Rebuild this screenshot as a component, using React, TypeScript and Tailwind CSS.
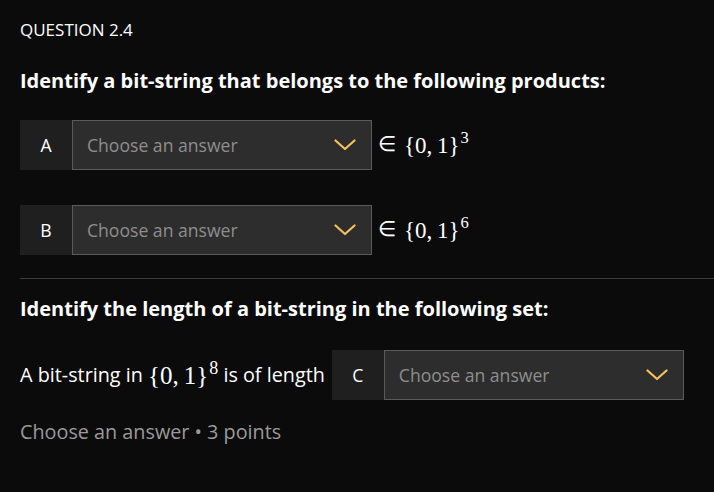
import React from "react";

const Chevron = () => (
  <svg width="22" height="12" viewBox="0 0 22 12" fill="none">
    <polyline points="1.5,1.5 11,10 20.5,1.5" stroke="#f4c15d" strokeWidth="2.2" strokeLinecap="round" strokeLinejoin="round" />
  </svg>
);

const Select = () => (
  <div className="flex h-[50px] w-[300px] items-center justify-between border border-[#5a5a5a] bg-[#2d2d2d] pl-[14px] pr-[15px]">
    <span className="text-[17.6px] text-[#8e8e8e]">Choose an answer</span>
    <Chevron />
  </div>
);

const Label = ({ l }: { l: string }) => (
  <div className="flex h-[50px] w-[52px] items-center justify-center bg-[#1f1f1f] text-[17.6px] text-white">{l}</div>
);

const SetExp = ({ n, size }: { n: string; size: string }) => (
  <span className={`inline-flex items-start whitespace-nowrap leading-none text-white ${size}`} style={{ fontFamily: '"Liberation Serif", serif' }}>
    <span>{"{0,\u20091}"}</span>
    <span className="ml-[1px] -mt-[0.22em] text-[0.72em] leading-none">{n}</span>
  </span>
);

export default function App() {
  return (
    <div className="min-h-[492px] w-[714px] bg-[#0b0b0b] pl-5 pt-[18px]" style={{ fontFamily: '"Open Sans", sans-serif' }}>
      <div className="text-[17px] leading-[24px] text-white">QUESTION 2.4</div>
      <div className="mt-[25px] text-[20px] font-bold leading-[28px] text-white">Identify a bit-string that belongs to the following products:</div>

      <div className="mt-[25px] flex items-center">
        <Label l="A" />
        <Select />
        <span className="ml-[6px] flex items-center text-white">
          <span className="mr-[8px] text-[21px]" style={{ fontFamily: '"Liberation Serif", serif' }}>∈</span>
          <SetExp n="3" size="text-[23px]" />
        </span>
      </div>

      <div className="mt-[35px] flex items-center">
        <Label l="B" />
        <Select />
        <span className="ml-[6px] flex items-center text-white">
          <span className="mr-[8px] text-[21px]" style={{ fontFamily: '"Liberation Serif", serif' }}>∈</span>
          <SetExp n="6" size="text-[23px]" />
        </span>
      </div>

      <div className="mt-[23px] h-px bg-[#3c3c3c]" />

      <div className="mt-[16px] text-[20px] font-bold leading-[28px] text-white">Identify the length of a bit-string in the following set:</div>

      <div className="mt-[27px] flex items-center text-[19.8px] text-white">
        <span>A bit-string in&nbsp;</span>
        <SetExp n="8" size="text-[25px]" />
        <span>&nbsp;is of length</span>
        <div className="ml-[7px] flex">
          <Label l="C" />
          <Select />
        </div>
      </div>

      <div className="mt-[18px] text-[19.8px] leading-[28px] text-[#9a9a9a]">Choose an answer • 3 points</div>
    </div>
  );
}
